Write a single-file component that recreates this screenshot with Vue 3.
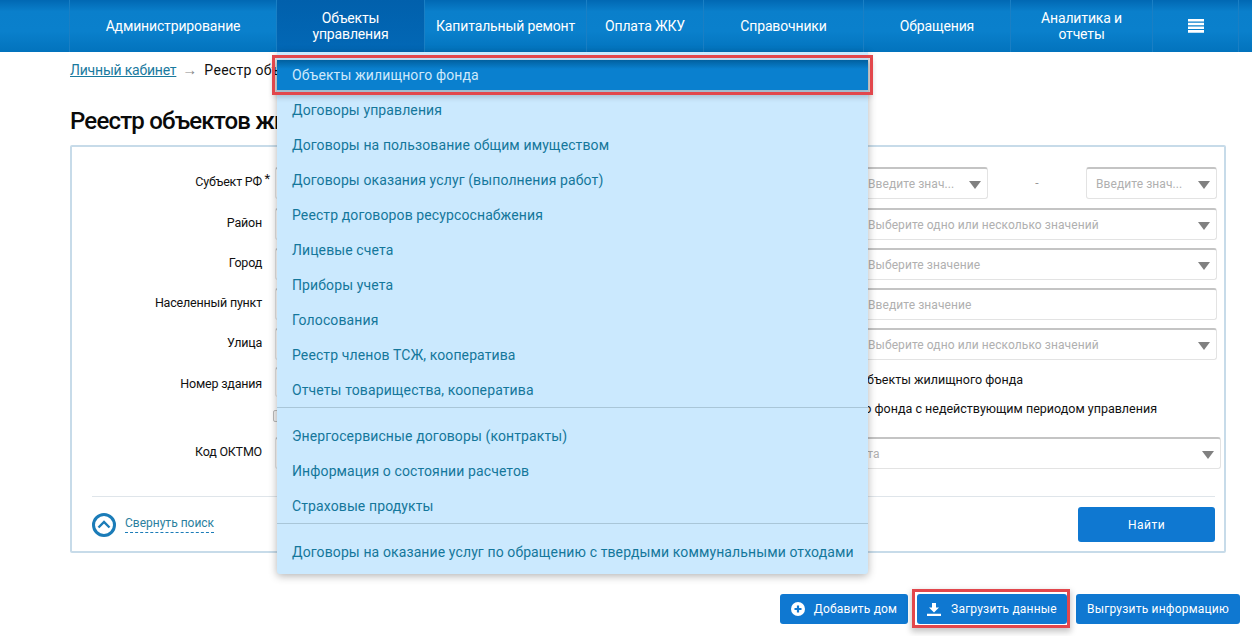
<script setup>
const nav = [
  { t: 'Администрирование', w: 207 },
  { t: 'Объекты управления', w: 148, active: true, two: true },
  { t: 'Капитальный ремонт', w: 162 },
  { t: 'Оплата ЖКУ', w: 117 },
  { t: 'Справочники', w: 160 },
  { t: 'Обращения', w: 147 },
  { t: 'Аналитика и отчеты', w: 142, two: true }
]
const group1 = ['Договоры управления', 'Договоры на пользование общим имуществом', 'Договоры оказания услуг (выполнения работ)', 'Реестр договоров ресурсоснабжения', 'Лицевые счета', 'Приборы учета', 'Голосования', 'Реестр членов ТСЖ, кооператива', 'Отчеты товарищества, кооператива']
const group2 = ['Энергосервисные договоры (контракты)', 'Информация о состоянии расчетов', 'Страховые продукты']
const rows = [
  { label: 'Субъект РФ', req: true, range: true },
  { label: 'Район', ph: 'Выберите одно или несколько значений', arrow: true },
  { label: 'Город', ph: 'Выберите значение', arrow: true },
  { label: 'Населенный пункт', ph: 'Введите значение', arrow: false },
  { label: 'Улица', ph: 'Выберите одно или несколько значений', arrow: true }
]
</script>

<template>
  <div class="page">
    <header class="topbar">
      <div v-for="n in nav" :key="n.t" class="nav-item" :class="{ active: n.active, two: n.two }" :style="{ width: n.w + 'px' }">{{ n.t }}</div>
      <div class="nav-item burger">
        <svg width="16" height="14" viewBox="0 0 16 14"><path d="M0 0h16v2.600H0zM0 3.700h16v2.600H0zM0 7.400h16V10H0zM0 11.100h16v2.600H0z" fill="#fff"/></svg>
      </div>
    </header>

    <main class="content">
      <nav class="crumbs"><a class="crumb-link">Личный кабинет</a><span class="arrow">→</span><span class="crumb-now">Реестр объектов жилищного фонда</span></nav>
      <h1 class="title">Реестр объектов жилищного фонда</h1>

      <section class="panel">
        <div v-for="r in rows" :key="r.label" class="row" :class="{ first: r.range }">
          <label class="lab">{{ r.label }}<sup v-if="r.req" class="req">*</sup></label>
          <div class="field left"></div>
          <div v-if="r.range" class="right range">
            <div class="field small"><span class="ph">Введите знач...</span><i class="tri"></i></div>
            <span class="dash">-</span>
            <div class="field small2"><span class="ph">Введите знач...</span><i class="tri"></i></div>
          </div>
          <div v-else class="right">
            <div class="field wide"><span class="ph">{{ r.ph }}</span><i v-if="r.arrow" class="tri"></i></div>
          </div>
        </div>

        <div class="row row-building">
          <label class="lab">Номер здания</label>
          <div class="field left"></div>
          <div class="right check c1">Показывать объекты жилищного фонда</div>
        </div>
        <div class="row row-check2">
          <div class="tick"></div>
          <div class="right check c2">Показывать объекты жилищного фонда с недействующим периодом управления</div>
        </div>
        <div class="row row-oktmo">
          <label class="lab">Код ОКТМО</label>
          <div class="field full"><span class="ph ph-far">Выберите значение кода объекта</span><i class="tri"></i></div>
        </div>

        <div class="panel-foot">
          <div class="collapse">
            <svg width="24" height="24" viewBox="0 0 24 24"><circle cx="12" cy="12" r="10.500" fill="none" stroke="#1b7cb8" stroke-width="3"/><path d="M6.500 14.500 12 9l5.500 5.500" fill="none" stroke="#1b7cb8" stroke-width="2.400"/></svg>
            <span class="collapse-text">Свернуть поиск</span>
          </div>
          <button class="btn find">Найти</button>
        </div>
      </section>

      <div class="actions">
        <button class="btn act add">
          <svg width="14" height="14" viewBox="0 0 14 14"><circle cx="7" cy="7" r="7" fill="#fff"/><path d="M3.500 7h7M7 3.500v7" stroke="#0f78d1" stroke-width="2.200"/></svg>
          Добавить дом
        </button>
        <button class="btn act load">
          <svg width="14" height="13" viewBox="0 0 14 13"><path d="M5 0h4v4.500h3L7 9.500 2 4.500h3zM0 10.800h14V13H0z" fill="#fff"/></svg>
          Загрузить данные
        </button>
        <button class="btn act export">Выгрузить информацию</button>
      </div>
    </main>

    <div class="menu">
      <a class="menu-item current">Объекты жилищного фонда</a>
      <a v-for="m in group1" :key="m" class="menu-item">{{ m }}</a>
      <div class="divider"></div>
      <a v-for="m in group2" :key="m" class="menu-item">{{ m }}</a>
      <div class="divider"></div>
      <a class="menu-item">Договоры на оказание услуг по обращению с твердыми коммунальными отходами</a>
    </div>
  </div>
</template>

<style>
html, body { margin: 0; background: #fff; }
</style>

<style scoped>
.page { position: relative; width: 1252px; height: 636px; overflow: hidden; font-family: Roboto, "Liberation Sans", sans-serif; color: #111; }
.topbar { display: flex; height: 52px; padding-left: 69px; background: linear-gradient(#0168b3 0, #0a7fcb 22%, #0a80cc 60%, #0273bd 100%); }
.nav-item { display: flex; align-items: center; justify-content: center; box-sizing: border-box; border-left: 1px solid #1a7fc4; color: #fff; font-size: 14px; letter-spacing: -.15px; line-height: 16px; text-align: center; }
.nav-item.two { padding: 0 28px; }
.nav-item.active { background: linear-gradient(#0160ac, #0268b6); }
.burger { width: 87px; border-right: 1px solid #1a7fc4; }
.content { padding: 0 12px 0 70px; }
.crumbs { height: 20px; padding-top: 8px; font-size: 14px; letter-spacing: -.2px; line-height: 20px; display: flex; }
.crumb-link { color: #1a7a9e; text-decoration: underline; }
.crumb-now { letter-spacing: .3px; }
.arrow { width: 13px; margin: 0 9px 0 6px; color: #888; font-family: "Liberation Sans", sans-serif; font-size: 15px; }
.title { margin: 26px 0 0; font-size: 24px; letter-spacing: -.8px; line-height: 30px; font-weight: 500; color: #0a0a0a; white-space: nowrap; }
.panel { box-sizing: border-box; width: 1156px; height: 408px; margin-top: 9px; padding: 20px 0 0; border: 2px solid #c7dbe9; border-radius: 2px; }
.row { display: flex; align-items: center; height: 32px; margin-bottom: 8px; }
.row.first { margin-bottom: 9px; }
.lab { box-sizing: border-box; width: 190px; padding-bottom: 4px; text-align: right; font-size: 12.500px; letter-spacing: -.2px; color: #111; flex: none; position: relative; }
.req { position: absolute; right: -8px; top: -3px; font-size: 13px; }
.field { box-sizing: border-box; height: 32px; border: 1px solid #e3e3e3; border-top: 2px solid #c4c4c4; border-radius: 3px; display: flex; align-items: center; position: relative; background: #fff; }
.left { width: 285px; margin-left: 13px; flex: none; }
.right { margin-left: 300px; width: 357px; flex: none; }
.range { display: flex; align-items: center; }
.small { width: 128px; }
.small2 { width: 131px; }
.dash { width: 98px; text-align: center; color: #999; font-size: 12px; }
.wide { width: 357px; }
.full { width: 946px; margin-left: 13px; flex: none; }
.ph { padding-left: 7px; font-size: 12px; letter-spacing: .08px; color: #b0b0b0; white-space: nowrap; }
.ph-far { padding-left: 412px; }
.small2 .ph { padding-left: 9px; }
.tri { position: absolute; right: 6px; top: 12px; width: 0; height: 0; border-left: 6px solid transparent; border-right: 6px solid transparent; border-top: 8px solid #808080; }
.row-building { height: 28px; margin-bottom: 0; }
.row-building .field { height: 30px; }
.row-building .lab { padding: 2px 0 0; }
.check { box-sizing: border-box; padding-bottom: 6px; font-size: 12.500px; letter-spacing: 0; white-space: nowrap; display: flex; justify-content: flex-end; color: #111; }
.c1 { padding-right: 194px; }
.c2 { padding-right: 60px; }
.row-check2 { height: 30px; margin-bottom: 0; }
.tick { width: 12px; height: 12px; border: 1px solid #bbb; border-radius: 2px; margin: 10px 0 0 201px; flex: none; box-sizing: border-box; background: #f2f2f2; }
.row-check2 .right { margin-left: 575px; }
.row-oktmo { margin-top: 11px; margin-bottom: 0; }
.panel-foot { display: flex; justify-content: space-between; align-items: center; margin: 27px 9px 0 20px; padding-top: 10px; border-top: 1px solid #dfe5ea; }
.collapse { display: flex; align-items: center; gap: 9px; }
.collapse-text { color: #2b7f9e; font-size: 12px; letter-spacing: 0; padding-bottom: 2px; border-bottom: 1px dashed #1b7cb8; }
.btn { border: 0; border-radius: 3px; background: #0f78d1; color: #fff; font-family: inherit; font-size: 12px; letter-spacing: .2px; display: flex; align-items: center; justify-content: center; }
.find { width: 137px; height: 35px; letter-spacing: .5px; }
.actions { display: flex; justify-content: flex-end; gap: 9px; margin-top: 41px; }
.act { height: 30px; gap: 9px; padding: 0; }
.add { width: 128px; }
.load { position: relative; width: 150px; gap: 10px; }
.load::after { content: ""; position: absolute; inset: -5px -3px -4px -5px; border: 3px solid #e2474c; box-shadow: 0 3px 6px 1px rgba(0,0,0,.22); pointer-events: none; }
.export { width: 164px; }
.menu { position: absolute; left: 277px; top: 52px; width: 591px; height: 522px; box-sizing: border-box; padding-top: 5px; background: #cbe9fe; box-shadow: 0 2px 8px rgba(0,0,0,.3); border-radius: 0 0 3px 3px; }
.menu-item { display: flex; align-items: center; height: 35px; padding-left: 15px; font-size: 14px; letter-spacing: .11px; color: #14779b; white-space: nowrap; }
.current { position: relative; height: 30px; margin: 3px 0 2px; background: linear-gradient(#01609f, #0a80cf 30%); color: #cfe9fb; outline: 3px solid #e2474c; outline-offset: 2px; box-shadow: 0 4px 6px 3px rgba(0,0,0,.2); }
.divider { height: 1px; background: #a9c6d8; margin: 0 0 10px; }
</style>
